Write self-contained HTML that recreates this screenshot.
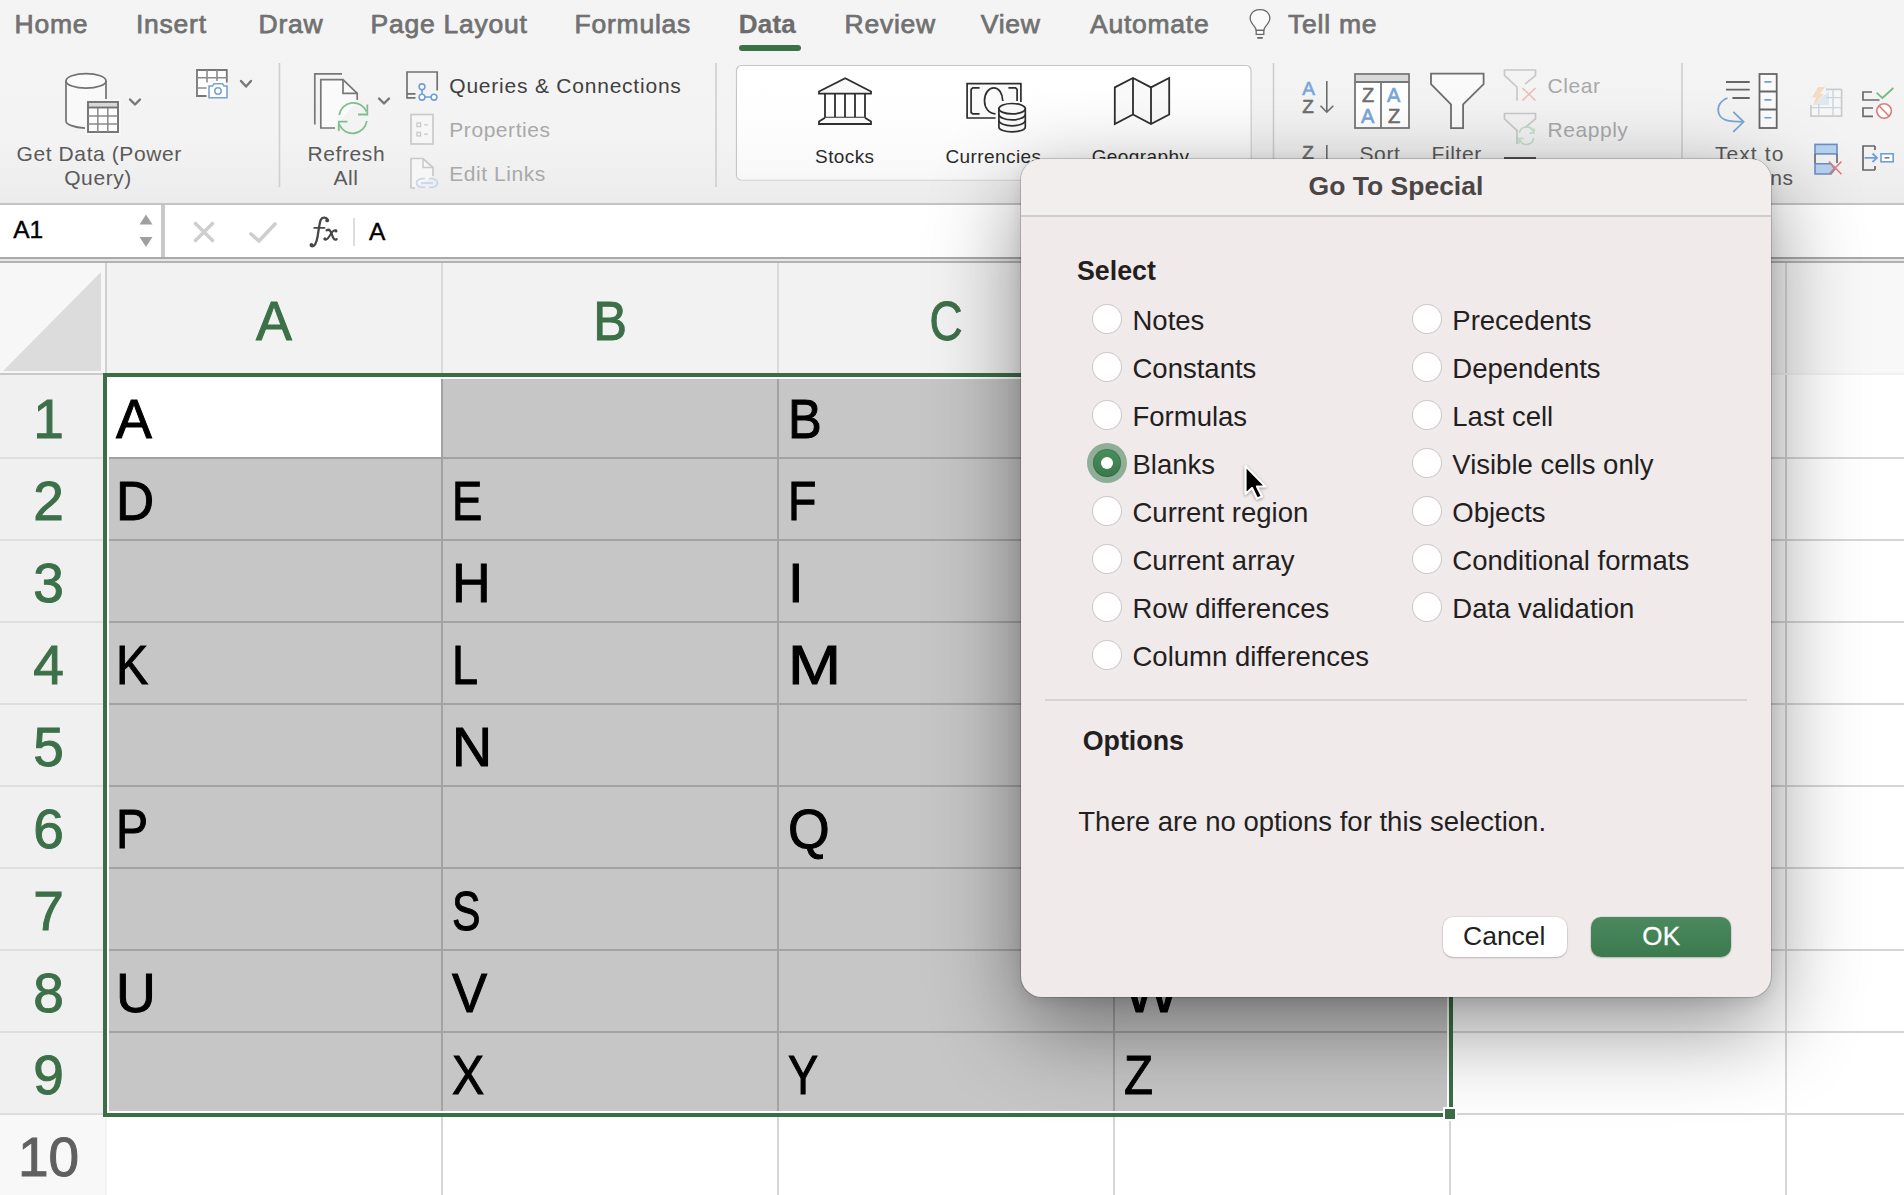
<!DOCTYPE html>
<html><head><meta charset="utf-8">
<style>
*{margin:0;padding:0;box-sizing:border-box}
html,body{width:1904px;height:1195px;overflow:hidden}
body{position:relative;background:#f3f3f3;font-family:"Liberation Sans",sans-serif}
.a{position:absolute}
.t{position:absolute;white-space:nowrap;line-height:1}
svg{position:absolute;overflow:visible}
</style></head><body>

<div class="a" style="left:0px;top:0px;width:1904px;height:203px;background:linear-gradient(#f4f4f4 0,#f3f3f3 140px,#ececec 203px);"></div>
<div class="t" style="left:14.6px;top:10.5px;font-size:26.5px;font-weight:normal;color:#717171;letter-spacing:0.75px;-webkit-text-stroke:0.75px #717171;">Home</div>
<div class="t" style="left:136.0px;top:10.5px;font-size:26.5px;font-weight:normal;color:#717171;letter-spacing:0.75px;-webkit-text-stroke:0.75px #717171;">Insert</div>
<div class="t" style="left:258.5px;top:10.5px;font-size:26.5px;font-weight:normal;color:#717171;letter-spacing:0.75px;-webkit-text-stroke:0.75px #717171;">Draw</div>
<div class="t" style="left:370.6px;top:10.5px;font-size:26.5px;font-weight:normal;color:#717171;letter-spacing:0.75px;-webkit-text-stroke:0.75px #717171;">Page Layout</div>
<div class="t" style="left:574.6px;top:10.5px;font-size:26.5px;font-weight:normal;color:#717171;letter-spacing:0.75px;-webkit-text-stroke:0.75px #717171;">Formulas</div>
<div class="t" style="left:844.5px;top:10.5px;font-size:26.5px;font-weight:normal;color:#717171;letter-spacing:0.75px;-webkit-text-stroke:0.75px #717171;">Review</div>
<div class="t" style="left:980.7px;top:10.5px;font-size:26.5px;font-weight:normal;color:#717171;letter-spacing:0.75px;-webkit-text-stroke:0.75px #717171;">View</div>
<div class="t" style="left:1090.0px;top:10.5px;font-size:26.5px;font-weight:normal;color:#717171;letter-spacing:0.75px;-webkit-text-stroke:0.75px #717171;">Automate</div>
<div class="t" style="left:1288.0px;top:10.5px;font-size:26.5px;font-weight:normal;color:#717171;letter-spacing:0.75px;-webkit-text-stroke:0.75px #717171;">Tell me</div>
<div class="t" style="left:738.8px;top:10.9px;font-size:26px;font-weight:bold;color:#6c6c6c;letter-spacing:0.2px;-webkit-text-stroke:0.3px #6c6c6c;">Data</div>
<div class="a" style="left:739px;top:45px;width:62px;height:6px;background:#3b7049;border-radius:3px;"></div>
<svg style="left:0;top:0" width="1904" height="200"><defs><linearGradient id="dtg" x1="0" y1="0" x2="0" y2="1"><stop offset="0" stop-color="#fff" stop-opacity="0"/><stop offset="1" stop-color="#f4f4f4" stop-opacity="0.7"/></linearGradient></defs><path d="M1256.2 30.4 C1255.5 27 1253.5 25.5 1252.5 24 C1247.5 18 1251 9.6 1260 9.6 C1269 9.6 1272.5 18 1267.5 24 C1266.5 25.5 1264.5 27 1263.8 30.4 Z" fill="#fafafa" stroke="#6a6a6a" stroke-width="1.3"/><rect x="1256.2" y="30.4" width="7.6" height="4" fill="#fff" stroke="#6a6a6a" stroke-width="1.3"/><rect x="1257.2" y="37" width="5.6" height="1.8" fill="#6a6a6a"/><path d="M66 81 L66 121 C66 124.5 74 127.5 85 128.2 L87 128.2 L87 101 L106 101 L106 81 Z" fill="#f9f9f9"/><ellipse cx="86" cy="80.9" rx="20" ry="7.3" fill="#fbfbfb" stroke="#727272" stroke-width="1.7"/><path d="M66 81 L66 121 C66 124.5 74 127.5 85 128.2" fill="none" stroke="#727272" stroke-width="1.7"/><path d="M106 81 L106 99" fill="none" stroke="#727272" stroke-width="1.7"/><rect x="85" y="99" width="36" height="36" fill="#f7f7f7"/><rect x="88" y="102" width="30" height="30" fill="#fff" stroke="#727272" stroke-width="1.9"/><rect x="89" y="103" width="28" height="4" fill="#d9d9d9"/><path d="M88 107.5 H118 M88 116 H118 M88 124 H118 M97.8 107.5 V132 M107.8 107.5 V132" stroke="#8a8a8a" stroke-width="1.5"/><path d="M88 107.5 H118" stroke="#727272" stroke-width="1.6"/><path d="M130 99.5 L135 104.5 L140 99.5" fill="none" stroke="#777" stroke-width="2.4" stroke-linecap="round" stroke-linejoin="round"/><path d="M206.5 96 H197 V70 H226.8 V82.5" fill="#fff" stroke="#777" stroke-width="1.8"/><path d="M197 77.8 H226.8 M197 88 H206.5 M207 70 V82.5 M217 70 V81" stroke="#8c8c8c" stroke-width="1.6"/><path d="M209 86 H212.5 L214 83.8 H222.5 L224 86 H227 V97.8 H209 Z" fill="#fff" stroke="#7aa3d2" stroke-width="1.6"/><circle cx="218" cy="91" r="3.2" fill="none" stroke="#7aa3d2" stroke-width="1.5"/><path d="M241 81 L246 86.5 L251 81" fill="none" stroke="#777" stroke-width="2.4" stroke-linecap="round" stroke-linejoin="round"/><path d="M279.5 63 V187" stroke="#cfcfcf" stroke-width="1.6"/><path d="M716 63 V187" stroke="#cfcfcf" stroke-width="1.6"/><path d="M1273.5 63 V187" stroke="#cfcfcf" stroke-width="1.6"/><path d="M1682 63 V158" stroke="#cfcfcf" stroke-width="1.6"/><path d="M342 73.8 H314.8 V124.6" fill="none" stroke="#777" stroke-width="1.7"/><path d="M335 128 H320.8 V79.7 H343 L357.2 93.3 V100" fill="#fafafa" stroke="#777" stroke-width="1.7"/><path d="M343 79.7 V93.3 H357.2" fill="none" stroke="#777" stroke-width="1.7"/><path d="M339.2 115 A14.3 14.3 0 0 1 366.5 111.5 M366.8 121 A14.3 14.3 0 0 1 339.4 124.5" fill="none" stroke="#7fbf8c" stroke-width="1.8"/><path d="M367.3 104.5 V114.5 H358" fill="none" stroke="#7fbf8c" stroke-width="1.8"/><path d="M338.8 131 V121.6 H347.5" fill="none" stroke="#7fbf8c" stroke-width="1.8"/><path d="M379 98.5 L384 103.5 L389 98.5" fill="none" stroke="#777" stroke-width="2.4" stroke-linecap="round" stroke-linejoin="round"/><path d="M437.2 90.5 V72 H407 V97.8 H415.5 M407 93.8 H415.5" fill="none" stroke="#727272" stroke-width="1.7"/><path d="M422 86.8 V97 H434" fill="none" stroke="#6f9fd8" stroke-width="1.6"/><circle cx="422" cy="86.8" r="2.9" fill="#fff" stroke="#6f9fd8" stroke-width="1.6"/><circle cx="422" cy="97.2" r="2.9" fill="#fff" stroke="#6f9fd8" stroke-width="1.6"/><circle cx="434" cy="97.2" r="2.9" fill="#fff" stroke="#6f9fd8" stroke-width="1.6"/><rect x="411" y="114.5" width="22" height="29.5" fill="#f6f6f6" stroke="#c9c9c9" stroke-width="1.7"/><rect x="417" y="123" width="3.6" height="3.6" fill="none" stroke="#c9c9c9" stroke-width="1.3"/><rect x="417" y="132.3" width="3.6" height="3.6" fill="none" stroke="#c9c9c9" stroke-width="1.3"/><path d="M424 124.8 H428 M424 134.1 H428" stroke="#c9c9c9" stroke-width="1.3"/><path d="M415 188 H411 V158.5 H423 L433 167.5 V176" fill="#f6f6f6" stroke="#c9c9c9" stroke-width="1.7"/><path d="M423 158.5 V167.5 H433" fill="none" stroke="#c9c9c9" stroke-width="1.5"/><path d="M425 178.5 C419 178.5 416.5 180.5 416.5 183 C416.5 185.5 419 187.5 425 187.5 M429 178.5 C435 178.5 437.5 180.5 437.5 183 C437.5 185.5 435 187.5 429 187.5" fill="none" stroke="#c5d6e8" stroke-width="1.7"/><path d="M421 183 H433" stroke="#c5d6e8" stroke-width="1.7"/><rect x="736.5" y="65.5" width="514.5" height="114.5" rx="5" fill="#fff" stroke="#c6c6c6" stroke-width="1.2"/><rect x="737" y="66" width="514" height="114" rx="5" fill="url(#dtg)"/><path d="M819 93.6 V91.5 L845.2 78.3 L871 91.5 V93.6 Z" fill="#f9f9f9" stroke="#2e2e2e" stroke-width="1.8" stroke-linejoin="miter"/><path d="M825 94 V117.7 M835 94 V117.7 M845 94 V117.7 M855 94 V117.7 M865 94 V117.7 M825 117.7 H865" stroke="#2e2e2e" stroke-width="1.8" fill="none"/><path d="M825 117.7 L819 121.5 V124 H871 V121.5 L865 117.7" fill="#fafafa" stroke="#2e2e2e" stroke-width="1.8"/><path d="M995.6 118 H967.1 V83.7 H1020.9 V101.9" fill="#fafafa" stroke="#2e2e2e" stroke-width="1.7"/><path d="M979.6 87.8 H972.8 L971.1 89.4 V112.5 L972.8 113.9 H979.6 M1008.4 87.8 H1015.5 L1017.1 89.4 V101" fill="none" stroke="#2e2e2e" stroke-width="1.7"/><path d="M995.5 113.8 C989 113.8 984.5 108 984.5 100.8 C984.5 93 989 87.8 993.7 87.8 C999 87.8 1002.5 93.5 1002.8 101" fill="none" stroke="#2e2e2e" stroke-width="1.7"/><path d="M998.9 108.7 V127.2 C998.9 130 1005 131.8 1012 131.8 C1019 131.8 1025.3 130 1025.3 127.2 V108.7 Z" fill="#fafafa" stroke="#2e2e2e" stroke-width="1.7"/><ellipse cx="1012.1" cy="108.7" rx="13.2" ry="5.2" fill="#fafafa" stroke="#2e2e2e" stroke-width="1.7"/><path d="M998.9 114.5 C998.9 117.5 1005 119.9 1012 119.9 C1019 119.9 1025.3 117.5 1025.3 114.5 M998.9 120.5 C998.9 123.5 1005 125.8 1012 125.8 C1019 125.8 1025.3 123.5 1025.3 120.5" fill="none" stroke="#2e2e2e" stroke-width="1.7"/><path d="M1114.8 87.4 L1133 78 L1151 87.4 L1169.2 78 V114.5 L1151 124 L1133 114.5 L1114.8 124 Z" fill="#fafafa" stroke="#2e2e2e" stroke-width="1.8" stroke-linejoin="miter"/><path d="M1133 78 V114.5 M1151 87.4 V124" stroke="#2e2e2e" stroke-width="1.8"/><path d="M1326.8 81 V112.5 M1320.5 105.8 L1326.8 112.2 L1333.3 105.8" fill="none" stroke="#6e6e6e" stroke-width="1.6"/><path d="M1326.8 145 V159" stroke="#6e6e6e" stroke-width="1.6"/><rect x="1355" y="74" width="54" height="54" fill="#fff" stroke="#777" stroke-width="1.8"/><rect x="1356" y="75" width="52" height="6.5" fill="#d9d9d9"/><path d="M1355 82 H1409 M1381 82 V128" stroke="#777" stroke-width="1.8"/><path d="M1431 73.7 H1483.6 V84.2 L1463.1 104.3 V128.1 H1451 V104.3 L1431 84.2 Z" fill="#fafafa" stroke="#6e6e6e" stroke-width="1.8" stroke-linejoin="miter"/><path d="M1525 84.2 L1535.5 75.4 V70 H1504.5 V75.4 L1517 87.1 V100.5" fill="none" stroke="#c8c8c8" stroke-width="1.7"/><path d="M1522.5 88 L1535.5 100.5 M1535.5 88 L1522.5 100.5" stroke="#f0b9b9" stroke-width="1.5"/><path d="M1525 127.7 L1535.5 118.9 V113.5 H1504.5 V118.9 L1517 130.6 V144" fill="none" stroke="#c8c8c8" stroke-width="1.7"/><path d="M1519.5 133 A7 7 0 0 1 1533 131.5 M1533.5 138 A7 7 0 0 1 1520 140" fill="none" stroke="#bfe0c6" stroke-width="1.6"/><path d="M1534 128.5 V133 H1529.5 M1519 143.5 V138.5 H1523.5" fill="none" stroke="#bfe0c6" stroke-width="1.6"/><rect x="1504" y="157" width="32" height="2" fill="#555"/><path d="M1726 82 H1749.7 M1726 89.6 H1749.7 M1732.4 98 H1749.7" stroke="#666" stroke-width="1.8"/><path d="M1727.5 98 C1720 101 1716.5 107 1719 114 C1721.5 120 1727 121.8 1744 121.8 M1733.3 111.8 L1743.6 121.8 L1733.3 131.8" fill="none" stroke="#7aa6d6" stroke-width="1.8"/><rect x="1759.5" y="74" width="17.2" height="54" fill="#fafafa" stroke="#666" stroke-width="1.8"/><path d="M1759.5 91.5 H1776.7 M1759.5 109.5 H1776.7" stroke="#666" stroke-width="1.8"/><path d="M1764.4 81.9 H1771.5 M1764.4 99.9 H1771.5 M1764.4 117.8 H1771.5" stroke="#6f9fd8" stroke-width="1.6"/><path d="M1841.5 89.5 V116 H1811 V105 M1826 89.5 H1841.5" fill="none" stroke="#cacaca" stroke-width="1.5"/><path d="M1828 90 L1811 106 V116 H1841 V90 Z" fill="#f6f6f6"/><path d="M1829 90.5 L1814 105 H1829 Z" fill="#dfe7f0"/><path d="M1841.5 89.5 V116 H1811 V105 M1826 89.5 H1841.5" fill="none" stroke="#cacaca" stroke-width="1.5"/><path d="M1811 107.6 H1841.5 M1833 89.5 V116 M1818.8 104 V116 M1826 97.6 H1841.5" stroke="#c9d3de" stroke-width="1.4"/><path d="M1818 87 H1825 L1820 94 H1824 L1812.5 107 L1816 97.5 H1812 Z" fill="#f3dcc2"/><path d="M1872 92 H1863 V100 H1879.5 M1873 108 H1863 V116.4 H1873" fill="none" stroke="#6a6a6a" stroke-width="1.7"/><path d="M1876.6 92.6 L1882.4 98 L1893.3 88" fill="none" stroke="#74b884" stroke-width="1.7"/><circle cx="1884.1" cy="111" r="7.3" fill="#fff" stroke="#e07a7a" stroke-width="1.6"/><path d="M1879 105.8 L1889.2 116.2" stroke="#e07a7a" stroke-width="1.6"/><rect x="1815" y="144.4" width="22" height="9.5" fill="#b7d1f0" stroke="#6a8fc2" stroke-width="1.6"/><path d="M1815 153.9 V163.7 M1837 153.9 V163" stroke="#666" stroke-width="1.6"/><path d="M1815 163.7 H1831 L1835 169 L1831 174 H1815 Z" fill="#b7d1f0" stroke="#6a8fc2" stroke-width="1.6"/><path d="M1828.8 161.5 L1841.5 174.2 M1841.5 161.5 L1828.8 174.2" stroke="#e07a7a" stroke-width="1.6"/><path d="M1875 146 H1863 V170 H1875 M1875 146 V150 M1875 166 V170" fill="none" stroke="#666" stroke-width="1.7"/><path d="M1864.5 157.8 H1876.5 M1872.5 153.5 L1877 157.8 L1872.5 162" fill="none" stroke="#6f9fd8" stroke-width="1.8"/><rect x="1881" y="153.8" width="12.2" height="8" fill="#fff" stroke="#6f9fd8" stroke-width="1.6"/><path d="M1884.5 157.8 H1889.5" stroke="#777" stroke-width="1.5"/></svg>
<div class="t" style="left:16.5px;top:142.8px;font-size:21px;font-weight:normal;color:#5a5a5a;letter-spacing:0.6px;">Get Data (Power</div>
<div class="t" style="left:64.2px;top:167.2px;font-size:21px;font-weight:normal;color:#5a5a5a;letter-spacing:0.6px;">Query)</div>
<div class="t" style="left:307.5px;top:143.2px;font-size:21px;font-weight:normal;color:#5a5a5a;letter-spacing:0.6px;">Refresh</div>
<div class="t" style="left:333.5px;top:167.2px;font-size:21px;font-weight:normal;color:#5a5a5a;letter-spacing:0.6px;">All</div>
<div class="t" style="left:449.3px;top:75.2px;font-size:21px;font-weight:normal;color:#404040;letter-spacing:0.78px;">Queries &amp; Connections</div>
<div class="t" style="left:449.3px;top:119.0px;font-size:21px;font-weight:normal;color:#a9a9a9;letter-spacing:0.55px;">Properties</div>
<div class="t" style="left:449.3px;top:162.7px;font-size:21px;font-weight:normal;color:#a9a9a9;letter-spacing:0.55px;">Edit Links</div>
<div class="t" style="left:815.1px;top:146.5px;font-size:19px;font-weight:normal;color:#2b2b2b;letter-spacing:0.4px;">Stocks</div>
<div class="t" style="left:945.5px;top:146.5px;font-size:19px;font-weight:normal;color:#2b2b2b;letter-spacing:0.4px;">Currencies</div>
<div class="t" style="left:1091.7px;top:146.5px;font-size:19px;font-weight:normal;color:#2b2b2b;letter-spacing:0.4px;">Geography</div>
<div class="t" style="left:1302.2px;top:78.7px;font-size:19px;font-weight:normal;color:#78a6d8;letter-spacing:0px;-webkit-text-stroke:0.6px #78a6d8;">A</div>
<div class="t" style="left:1302.2px;top:96.6px;font-size:19px;font-weight:normal;color:#6e6e6e;letter-spacing:0px;-webkit-text-stroke:0.6px #6e6e6e;">Z</div>
<div class="t" style="left:1302.2px;top:142.7px;font-size:19px;font-weight:normal;color:#6e6e6e;letter-spacing:0px;-webkit-text-stroke:0.6px #6e6e6e;">Z</div>
<div class="t" style="left:1362.0px;top:85.4px;font-size:20px;font-weight:normal;color:#6e6e6e;letter-spacing:0px;-webkit-text-stroke:0.6px #6e6e6e;">Z</div>
<div class="t" style="left:1361.0px;top:105.7px;font-size:20px;font-weight:normal;color:#78a6d8;letter-spacing:0px;-webkit-text-stroke:0.6px #78a6d8;">A</div>
<div class="t" style="left:1387.0px;top:85.4px;font-size:20px;font-weight:normal;color:#78a6d8;letter-spacing:0px;-webkit-text-stroke:0.6px #78a6d8;">A</div>
<div class="t" style="left:1388.0px;top:105.7px;font-size:20px;font-weight:normal;color:#6e6e6e;letter-spacing:0px;-webkit-text-stroke:0.6px #6e6e6e;">Z</div>
<div class="t" style="left:1359.5px;top:143.2px;font-size:21px;font-weight:normal;color:#5a5a5a;letter-spacing:0.6px;">Sort</div>
<div class="t" style="left:1431.5px;top:143.2px;font-size:21px;font-weight:normal;color:#5a5a5a;letter-spacing:0.6px;">Filter</div>
<div class="t" style="left:1547.5px;top:75.0px;font-size:21px;font-weight:normal;color:#a9a9a9;letter-spacing:0.55px;">Clear</div>
<div class="t" style="left:1547.5px;top:118.7px;font-size:21px;font-weight:normal;color:#a9a9a9;letter-spacing:0.55px;">Reapply</div>
<div class="t" style="left:1714.9px;top:142.7px;font-size:21px;font-weight:normal;color:#5a5a5a;letter-spacing:1.1px;">Text to</div>
<div class="t" style="left:1706.5px;top:166.7px;font-size:21px;font-weight:normal;color:#5a5a5a;letter-spacing:0.6px;">Columns</div>
<div class="a" style="left:0px;top:203px;width:1904px;height:2px;background:#c4c4c4;"></div>
<div class="a" style="left:0px;top:205px;width:1904px;height:52px;background:#fff;"></div>
<div class="a" style="left:161px;top:205px;width:4px;height:52px;background:#c9c9c9;"></div>
<div class="t" style="left:13.2px;top:218.0px;font-size:24.5px;font-weight:normal;color:#000;letter-spacing:0px;-webkit-text-stroke:0.4px #000;">A1</div>
<svg style="left:0;top:0" width="1904" height="1195"><path d="M139.5 224.5 L146 214.5 L152.5 224.5Z M139.5 237 L146 247 L152.5 237Z" fill="#a0a0a0"/></svg>
<svg style="left:0;top:0" width="400" height="260"><path d="M195.5 223.5 L212.5 240.5 M212.5 223.5 L195.5 240.5" stroke="#cecece" stroke-width="3.6" stroke-linecap="round"/><path d="M251 234 L259 241 L275 224" stroke="#cecece" stroke-width="3.6" fill="none" stroke-linecap="round" stroke-linejoin="round"/></svg>
<svg style="left:0;top:0" width="400" height="260"><g fill="none" stroke="#474747" stroke-linecap="round"><path d="M327.6 219.8 C326.5 217.2 322.6 216.8 320.9 219.6 C319.6 221.8 318.8 229 317.6 236.5 C316.6 242.5 314.8 246.6 311.6 246.2" stroke-width="2.3"/><path d="M314.2 227.9 H324.6" stroke-width="1.7"/><path d="M324.6 239.4 C326.8 240.6 328.6 237.6 330.6 234.2 C332.4 231.2 334 229.4 336.2 230.4" stroke-width="1.9"/><path d="M326.6 230.2 C329.6 228.6 331 231.6 332.1 235 C333.1 238.2 334.3 240.6 336.6 239.2" stroke-width="2.3"/></g><circle cx="327.2" cy="220.4" r="1.9" fill="#474747"/><circle cx="311.4" cy="245" r="1.9" fill="#474747"/><circle cx="324.9" cy="238.8" r="1.5" fill="#474747"/><circle cx="336" cy="231" r="1.5" fill="#474747"/></svg>
<div class="a" style="left:353px;top:218px;width:2px;height:28px;background:#dddddd;"></div>
<div class="t" style="left:369.0px;top:220.2px;font-size:24.5px;font-weight:normal;color:#000;letter-spacing:0px;-webkit-text-stroke:0.4px #000;">A</div>
<div class="a" style="left:0px;top:257px;width:1904px;height:2px;background:#a9a9a9;"></div>
<div class="a" style="left:0px;top:259px;width:1904px;height:2px;background:#e6e6e6;"></div>
<div class="a" style="left:0px;top:261px;width:1904px;height:2px;background:#b3b3b3;"></div>
<div class="a" style="left:0px;top:263px;width:1904px;height:112px;background:#f2f2f2;"></div>
<div class="a" style="left:1449px;top:263px;width:455px;height:110px;background:#f8f8f8;"></div>
<div class="a" style="left:0px;top:263px;width:105px;height:110px;background:#f7f7f7;"></div>
<svg style="left:0;top:0" width="120" height="380"><path d="M3 371 L101 272 L101 371Z" fill="#dcdcdc"/></svg>
<div class="a" style="left:105px;top:263px;width:2px;height:112px;background:#d0d0d0;"></div>
<div class="a" style="left:0px;top:373px;width:105px;height:2px;background:#c9c9c9;"></div>
<div class="a" style="left:441px;top:263px;width:2px;height:110px;background:#dadada;"></div>
<div class="a" style="left:777px;top:263px;width:2px;height:110px;background:#dadada;"></div>
<div class="a" style="left:1113px;top:263px;width:2px;height:110px;background:#dadada;"></div>
<div class="a" style="left:1449px;top:263px;width:2px;height:110px;background:#dadada;"></div>
<div class="a" style="left:1785px;top:263px;width:2px;height:110px;background:#dadada;"></div>
<div class="a" style="left:1453px;top:375px;width:451px;height:2px;background:#c4c4c4;"></div>
<div class="t" style="left:107px;top:294.2px;width:334px;text-align:center;font-size:55px;color:#3c7049;-webkit-text-stroke:1px #3c7049;transform:scaleX(0.979)">A</div>
<div class="t" style="left:443px;top:294.2px;width:334px;text-align:center;font-size:55px;color:#3c7049;-webkit-text-stroke:1px #3c7049;transform:scaleX(0.919)">B</div>
<div class="t" style="left:779px;top:294.2px;width:334px;text-align:center;font-size:55px;color:#3c7049;-webkit-text-stroke:1px #3c7049;transform:scaleX(0.832)">C</div>
<div class="t" style="left:1115px;top:294.2px;width:334px;text-align:center;font-size:55px;color:#3c7049;-webkit-text-stroke:1px #3c7049;transform:scaleX(0.960)">D</div>
<div class="t" style="left:1451px;top:294.2px;width:334px;text-align:center;font-size:55px;color:#666">E</div>
<div class="a" style="left:0px;top:375px;width:105px;height:738px;background:#f0f0f0;"></div>
<div class="a" style="left:0px;top:1115px;width:105px;height:80px;background:#f8f8f8;"></div>
<div class="a" style="left:0px;top:457px;width:105px;height:2px;background:#dedede;"></div>
<div class="a" style="left:0px;top:539px;width:105px;height:2px;background:#dedede;"></div>
<div class="a" style="left:0px;top:621px;width:105px;height:2px;background:#dedede;"></div>
<div class="a" style="left:0px;top:703px;width:105px;height:2px;background:#dedede;"></div>
<div class="a" style="left:0px;top:785px;width:105px;height:2px;background:#dedede;"></div>
<div class="a" style="left:0px;top:867px;width:105px;height:2px;background:#dedede;"></div>
<div class="a" style="left:0px;top:949px;width:105px;height:2px;background:#dedede;"></div>
<div class="a" style="left:0px;top:1031px;width:105px;height:2px;background:#dedede;"></div>
<div class="a" style="left:0px;top:1113px;width:105px;height:2px;background:#dedede;"></div>
<div class="t" style="left:0px;top:392.2px;width:97px;text-align:center;font-size:55px;color:#3c7049;-webkit-text-stroke:1px #3c7049">1</div>
<div class="t" style="left:0px;top:474.2px;width:97px;text-align:center;font-size:55px;color:#3c7049;-webkit-text-stroke:1px #3c7049">2</div>
<div class="t" style="left:0px;top:556.2px;width:97px;text-align:center;font-size:55px;color:#3c7049;-webkit-text-stroke:1px #3c7049">3</div>
<div class="t" style="left:0px;top:638.2px;width:97px;text-align:center;font-size:55px;color:#3c7049;-webkit-text-stroke:1px #3c7049">4</div>
<div class="t" style="left:0px;top:720.2px;width:97px;text-align:center;font-size:55px;color:#3c7049;-webkit-text-stroke:1px #3c7049">5</div>
<div class="t" style="left:0px;top:802.2px;width:97px;text-align:center;font-size:55px;color:#3c7049;-webkit-text-stroke:1px #3c7049">6</div>
<div class="t" style="left:0px;top:884.2px;width:97px;text-align:center;font-size:55px;color:#3c7049;-webkit-text-stroke:1px #3c7049">7</div>
<div class="t" style="left:0px;top:966.2px;width:97px;text-align:center;font-size:55px;color:#3c7049;-webkit-text-stroke:1px #3c7049">8</div>
<div class="t" style="left:0px;top:1048.2px;width:97px;text-align:center;font-size:55px;color:#3c7049;-webkit-text-stroke:1px #3c7049">9</div>
<div class="t" style="left:0px;top:1130.2px;width:97px;text-align:center;font-size:55px;color:#606060;-webkit-text-stroke:1px #606060">10</div>
<div class="a" style="left:107px;top:375px;width:1797px;height:820px;background:#fff;"></div>
<div class="a" style="left:107px;top:375px;width:1342px;height:738px;background:#c6c6c6;"></div>
<div class="a" style="left:107px;top:377px;width:334px;height:80px;background:#fff;"></div>
<div class="a" style="left:441px;top:1113px;width:2px;height:82px;background:#d6d6d6;"></div>
<div class="a" style="left:777px;top:1113px;width:2px;height:82px;background:#d6d6d6;"></div>
<div class="a" style="left:1113px;top:1113px;width:2px;height:82px;background:#d6d6d6;"></div>
<div class="a" style="left:1449px;top:1113px;width:2px;height:82px;background:#d6d6d6;"></div>
<div class="a" style="left:1785px;top:1113px;width:2px;height:82px;background:#d6d6d6;"></div>
<div class="a" style="left:1785px;top:375px;width:2px;height:738px;background:#d6d6d6;"></div>
<div class="a" style="left:1451px;top:457px;width:453px;height:2px;background:#d6d6d6;"></div>
<div class="a" style="left:1451px;top:539px;width:453px;height:2px;background:#d6d6d6;"></div>
<div class="a" style="left:1451px;top:621px;width:453px;height:2px;background:#d6d6d6;"></div>
<div class="a" style="left:1451px;top:703px;width:453px;height:2px;background:#d6d6d6;"></div>
<div class="a" style="left:1451px;top:785px;width:453px;height:2px;background:#d6d6d6;"></div>
<div class="a" style="left:1451px;top:867px;width:453px;height:2px;background:#d6d6d6;"></div>
<div class="a" style="left:1451px;top:949px;width:453px;height:2px;background:#d6d6d6;"></div>
<div class="a" style="left:1451px;top:1031px;width:453px;height:2px;background:#d6d6d6;"></div>
<div class="a" style="left:1451px;top:1113px;width:453px;height:2px;background:#d6d6d6;"></div>
<div class="a" style="left:107px;top:1113px;width:1797px;height:2px;background:#d6d6d6;"></div>
<div class="a" style="left:441px;top:377px;width:2px;height:736px;background:#a2a2a2;"></div>
<div class="a" style="left:777px;top:377px;width:2px;height:736px;background:#a2a2a2;"></div>
<div class="a" style="left:1113px;top:377px;width:2px;height:736px;background:#a2a2a2;"></div>
<div class="a" style="left:107px;top:457px;width:1342px;height:2px;background:#a2a2a2;"></div>
<div class="a" style="left:107px;top:539px;width:1342px;height:2px;background:#a2a2a2;"></div>
<div class="a" style="left:107px;top:621px;width:1342px;height:2px;background:#a2a2a2;"></div>
<div class="a" style="left:107px;top:703px;width:1342px;height:2px;background:#a2a2a2;"></div>
<div class="a" style="left:107px;top:785px;width:1342px;height:2px;background:#a2a2a2;"></div>
<div class="a" style="left:107px;top:867px;width:1342px;height:2px;background:#a2a2a2;"></div>
<div class="a" style="left:107px;top:949px;width:1342px;height:2px;background:#a2a2a2;"></div>
<div class="a" style="left:107px;top:1031px;width:1342px;height:2px;background:#a2a2a2;"></div>
<div class="a" style="left:107px;top:457px;width:1342px;height:2px;background:#a2a2a2;"></div>
<div class="a" style="left:107px;top:377px;width:1342px;height:736px;border:2px solid #fff;border-left-width:2px"></div>
<div class="a" style="left:103px;top:373px;width:1350px;height:744px;border:4px solid #3b6e47"></div>
<div class="a" style="left:1443px;top:1107px;width:14px;height:14px;background:#fff;"></div>
<div class="a" style="left:1445px;top:1109px;width:10px;height:10px;background:#3b6e47;"></div>
<div class="t" style="left:115.7px;top:392.2px;font-size:55px;font-weight:normal;color:#000;letter-spacing:0px;-webkit-text-stroke:1px #000;transform:scaleX(0.979);transform-origin:0 0;">A</div>
<div class="t" style="left:787.6px;top:392.2px;font-size:55px;font-weight:normal;color:#000;letter-spacing:0px;-webkit-text-stroke:1px #000;transform:scaleX(0.919);transform-origin:0 0;">B</div>
<div class="t" style="left:1123.7px;top:392.2px;font-size:55px;font-weight:normal;color:#000;letter-spacing:0px;-webkit-text-stroke:1px #000;transform:scaleX(0.832);transform-origin:0 0;">C</div>
<div class="t" style="left:115.7px;top:474.2px;font-size:55px;font-weight:normal;color:#000;letter-spacing:0px;-webkit-text-stroke:1px #000;transform:scaleX(0.960);transform-origin:0 0;">D</div>
<div class="t" style="left:451.6px;top:474.2px;font-size:55px;font-weight:normal;color:#000;letter-spacing:0px;-webkit-text-stroke:1px #000;transform:scaleX(0.825);transform-origin:0 0;">E</div>
<div class="t" style="left:787.6px;top:474.2px;font-size:55px;font-weight:normal;color:#000;letter-spacing:0px;-webkit-text-stroke:1px #000;transform:scaleX(0.847);transform-origin:0 0;">F</div>
<div class="t" style="left:1123.7px;top:474.2px;font-size:55px;font-weight:normal;color:#000;letter-spacing:0px;-webkit-text-stroke:1px #000;transform:scaleX(0.914);transform-origin:0 0;">G</div>
<div class="t" style="left:451.6px;top:556.2px;font-size:55px;font-weight:normal;color:#000;letter-spacing:0px;-webkit-text-stroke:1px #000;transform:scaleX(0.973);transform-origin:0 0;">H</div>
<div class="t" style="left:787.6px;top:556.2px;font-size:55px;font-weight:normal;color:#000;letter-spacing:0px;-webkit-text-stroke:1px #000;transform:scaleX(1.022);transform-origin:0 0;">I</div>
<div class="t" style="left:1123.7px;top:556.2px;font-size:55px;font-weight:normal;color:#000;letter-spacing:0px;-webkit-text-stroke:1px #000;transform:scaleX(0.719);transform-origin:0 0;">J</div>
<div class="t" style="left:115.7px;top:638.2px;font-size:55px;font-weight:normal;color:#000;letter-spacing:0px;-webkit-text-stroke:1px #000;transform:scaleX(0.879);transform-origin:0 0;">K</div>
<div class="t" style="left:451.6px;top:638.2px;font-size:55px;font-weight:normal;color:#000;letter-spacing:0px;-webkit-text-stroke:1px #000;transform:scaleX(0.852);transform-origin:0 0;">L</div>
<div class="t" style="left:787.6px;top:638.2px;font-size:55px;font-weight:normal;color:#000;letter-spacing:0px;-webkit-text-stroke:1px #000;transform:scaleX(1.157);transform-origin:0 0;">M</div>
<div class="t" style="left:1123.7px;top:638.2px;font-size:55px;font-weight:normal;color:#000;letter-spacing:0px;-webkit-text-stroke:1px #000;transform:scaleX(0.959);transform-origin:0 0;">O</div>
<div class="t" style="left:451.6px;top:720.2px;font-size:55px;font-weight:normal;color:#000;letter-spacing:0px;-webkit-text-stroke:1px #000;transform:scaleX(1.009);transform-origin:0 0;">N</div>
<div class="t" style="left:115.7px;top:802.2px;font-size:55px;font-weight:normal;color:#000;letter-spacing:0px;-webkit-text-stroke:1px #000;transform:scaleX(0.874);transform-origin:0 0;">P</div>
<div class="t" style="left:787.6px;top:802.2px;font-size:55px;font-weight:normal;color:#000;letter-spacing:0px;-webkit-text-stroke:1px #000;transform:scaleX(0.975);transform-origin:0 0;">Q</div>
<div class="t" style="left:1123.7px;top:802.2px;font-size:55px;font-weight:normal;color:#000;letter-spacing:0px;-webkit-text-stroke:1px #000;transform:scaleX(0.848);transform-origin:0 0;">R</div>
<div class="t" style="left:451.6px;top:884.2px;font-size:55px;font-weight:normal;color:#000;letter-spacing:0px;-webkit-text-stroke:1px #000;transform:scaleX(0.776);transform-origin:0 0;">S</div>
<div class="t" style="left:1123.7px;top:884.2px;font-size:55px;font-weight:normal;color:#000;letter-spacing:0px;-webkit-text-stroke:1px #000;transform:scaleX(0.898);transform-origin:0 0;">T</div>
<div class="t" style="left:115.7px;top:966.2px;font-size:55px;font-weight:normal;color:#000;letter-spacing:0px;-webkit-text-stroke:1px #000;transform:scaleX(1.002);transform-origin:0 0;">U</div>
<div class="t" style="left:451.6px;top:966.2px;font-size:55px;font-weight:normal;color:#000;letter-spacing:0px;-webkit-text-stroke:1px #000;transform:scaleX(0.958);transform-origin:0 0;">V</div>
<div class="t" style="left:1123.7px;top:966.2px;font-size:55px;font-weight:normal;color:#000;letter-spacing:0px;-webkit-text-stroke:1px #000;transform:scaleX(1.063);transform-origin:0 0;">W</div>
<div class="t" style="left:451.6px;top:1048.2px;font-size:55px;font-weight:normal;color:#000;letter-spacing:0px;-webkit-text-stroke:1px #000;transform:scaleX(0.877);transform-origin:0 0;">X</div>
<div class="t" style="left:787.6px;top:1048.2px;font-size:55px;font-weight:normal;color:#000;letter-spacing:0px;-webkit-text-stroke:1px #000;transform:scaleX(0.823);transform-origin:0 0;">Y</div>
<div class="t" style="left:1123.7px;top:1048.2px;font-size:55px;font-weight:normal;color:#000;letter-spacing:0px;-webkit-text-stroke:1px #000;transform:scaleX(0.863);transform-origin:0 0;">Z</div>
<div class="a" style="left:1021px;top:159px;width:750px;height:838px;border-radius:21px;background:#f0eaea;box-shadow:0 0 0 1px rgba(0,0,0,0.16),0 30px 90px rgba(0,0,0,0.44),0 4px 14px rgba(0,0,0,0.10);overflow:hidden"><div class="a" style="left:0;top:0;width:750px;height:56px;background:#f3eeee"></div><div class="a" style="left:0;top:56px;width:750px;height:1.5px;background:#d2cdcd"></div></div>
<div class="t" style="left:1308.6px;top:172.6px;font-size:26.5px;font-weight:bold;color:#4a4646;letter-spacing:0px;">Go To Special</div>
<div class="t" style="left:1077.0px;top:258.2px;font-size:26.8px;font-weight:bold;color:#231f1f;letter-spacing:0px;">Select</div>
<div class="a" style="left:1093px;top:305px;width:28px;height:28px;border-radius:50%;background:#fff;box-shadow:0 0 0 1px #cdc9c9,0 1px 1px rgba(0,0,0,0.08)"></div>
<div class="t" style="left:1132.5px;top:306.9px;font-size:27.5px;font-weight:normal;color:#231f1f;letter-spacing:0px;">Notes</div>
<div class="a" style="left:1093px;top:353px;width:28px;height:28px;border-radius:50%;background:#fff;box-shadow:0 0 0 1px #cdc9c9,0 1px 1px rgba(0,0,0,0.08)"></div>
<div class="t" style="left:1132.5px;top:354.9px;font-size:27.5px;font-weight:normal;color:#231f1f;letter-spacing:0px;">Constants</div>
<div class="a" style="left:1093px;top:401px;width:28px;height:28px;border-radius:50%;background:#fff;box-shadow:0 0 0 1px #cdc9c9,0 1px 1px rgba(0,0,0,0.08)"></div>
<div class="t" style="left:1132.5px;top:402.9px;font-size:27.5px;font-weight:normal;color:#231f1f;letter-spacing:0px;">Formulas</div>
<div class="a" style="left:1087px;top:443px;width:40px;height:40px;border-radius:50%;background:#8fae97"></div>
<div class="a" style="left:1093px;top:449px;width:28px;height:28px;border-radius:50%;background:linear-gradient(#4a8e5d,#3a784b);box-shadow:inset 0 0 0 1px rgba(0,0,0,0.12)"></div>
<div class="a" style="left:1101px;top:457px;width:12px;height:12px;border-radius:50%;background:#fff"></div>
<div class="t" style="left:1132.5px;top:450.9px;font-size:27.5px;font-weight:normal;color:#231f1f;letter-spacing:0px;">Blanks</div>
<div class="a" style="left:1093px;top:497px;width:28px;height:28px;border-radius:50%;background:#fff;box-shadow:0 0 0 1px #cdc9c9,0 1px 1px rgba(0,0,0,0.08)"></div>
<div class="t" style="left:1132.5px;top:498.9px;font-size:27.5px;font-weight:normal;color:#231f1f;letter-spacing:0px;">Current region</div>
<div class="a" style="left:1093px;top:545px;width:28px;height:28px;border-radius:50%;background:#fff;box-shadow:0 0 0 1px #cdc9c9,0 1px 1px rgba(0,0,0,0.08)"></div>
<div class="t" style="left:1132.5px;top:546.9px;font-size:27.5px;font-weight:normal;color:#231f1f;letter-spacing:0px;">Current array</div>
<div class="a" style="left:1093px;top:593px;width:28px;height:28px;border-radius:50%;background:#fff;box-shadow:0 0 0 1px #cdc9c9,0 1px 1px rgba(0,0,0,0.08)"></div>
<div class="t" style="left:1132.5px;top:594.9px;font-size:27.5px;font-weight:normal;color:#231f1f;letter-spacing:0px;">Row differences</div>
<div class="a" style="left:1093px;top:641px;width:28px;height:28px;border-radius:50%;background:#fff;box-shadow:0 0 0 1px #cdc9c9,0 1px 1px rgba(0,0,0,0.08)"></div>
<div class="t" style="left:1132.5px;top:642.9px;font-size:27.5px;font-weight:normal;color:#231f1f;letter-spacing:0px;">Column differences</div>
<div class="a" style="left:1413px;top:305px;width:28px;height:28px;border-radius:50%;background:#fff;box-shadow:0 0 0 1px #cdc9c9,0 1px 1px rgba(0,0,0,0.08)"></div>
<div class="t" style="left:1452.3px;top:306.9px;font-size:27.5px;font-weight:normal;color:#231f1f;letter-spacing:0px;">Precedents</div>
<div class="a" style="left:1413px;top:353px;width:28px;height:28px;border-radius:50%;background:#fff;box-shadow:0 0 0 1px #cdc9c9,0 1px 1px rgba(0,0,0,0.08)"></div>
<div class="t" style="left:1452.3px;top:354.9px;font-size:27.5px;font-weight:normal;color:#231f1f;letter-spacing:0px;">Dependents</div>
<div class="a" style="left:1413px;top:401px;width:28px;height:28px;border-radius:50%;background:#fff;box-shadow:0 0 0 1px #cdc9c9,0 1px 1px rgba(0,0,0,0.08)"></div>
<div class="t" style="left:1452.3px;top:402.9px;font-size:27.5px;font-weight:normal;color:#231f1f;letter-spacing:0px;">Last cell</div>
<div class="a" style="left:1413px;top:449px;width:28px;height:28px;border-radius:50%;background:#fff;box-shadow:0 0 0 1px #cdc9c9,0 1px 1px rgba(0,0,0,0.08)"></div>
<div class="t" style="left:1452.3px;top:450.9px;font-size:27.5px;font-weight:normal;color:#231f1f;letter-spacing:0px;">Visible cells only</div>
<div class="a" style="left:1413px;top:497px;width:28px;height:28px;border-radius:50%;background:#fff;box-shadow:0 0 0 1px #cdc9c9,0 1px 1px rgba(0,0,0,0.08)"></div>
<div class="t" style="left:1452.3px;top:498.9px;font-size:27.5px;font-weight:normal;color:#231f1f;letter-spacing:0px;">Objects</div>
<div class="a" style="left:1413px;top:545px;width:28px;height:28px;border-radius:50%;background:#fff;box-shadow:0 0 0 1px #cdc9c9,0 1px 1px rgba(0,0,0,0.08)"></div>
<div class="t" style="left:1452.3px;top:546.9px;font-size:27.5px;font-weight:normal;color:#231f1f;letter-spacing:0px;">Conditional formats</div>
<div class="a" style="left:1413px;top:593px;width:28px;height:28px;border-radius:50%;background:#fff;box-shadow:0 0 0 1px #cdc9c9,0 1px 1px rgba(0,0,0,0.08)"></div>
<div class="t" style="left:1452.3px;top:594.9px;font-size:27.5px;font-weight:normal;color:#231f1f;letter-spacing:0px;">Data validation</div>
<div class="a" style="left:1045px;top:699px;width:702px;height:2px;background:#d8d4d4;"></div>
<div class="t" style="left:1082.7px;top:728.2px;font-size:26.8px;font-weight:bold;color:#231f1f;letter-spacing:0px;">Options</div>
<div class="t" style="left:1078.3px;top:808.1px;font-size:27.5px;font-weight:normal;color:#231f1f;letter-spacing:0px;">There are no options for this selection.</div>
<div class="a" style="left:1443px;top:917px;width:124px;height:40px;border-radius:10px;background:#fff;box-shadow:0 0 0 0.5px rgba(0,0,0,0.12),0 1px 2px rgba(0,0,0,0.18)"></div>
<div class="t" style="left:1463.0px;top:922.5px;font-size:26.5px;font-weight:normal;color:#231f1f;letter-spacing:0px;">Cancel</div>
<div class="a" style="left:1591px;top:917px;width:140px;height:40px;border-radius:10px;background:linear-gradient(#4a8a5e,#3a7a4d);box-shadow:0 0 0 0.5px rgba(0,0,0,0.12),0 1px 2px rgba(0,0,0,0.18)"></div>
<div class="t" style="left:1642.2px;top:922.9px;font-size:26px;font-weight:normal;color:#fff;letter-spacing:0.3px;-webkit-text-stroke:0.3px #fff;">OK</div>
<svg style="left:0;top:0" width="1904" height="1195"><path d="M1245.5 466 L1245.5 494 L1252 488 L1257 498.5 L1262 496.5 L1257 486.5 L1265.5 486.5 Z" fill="#000" stroke="#fff" stroke-width="2.2" stroke-linejoin="round" style="filter:drop-shadow(0 1px 1.5px rgba(0,0,0,0.35))"/></svg>
</body></html>
